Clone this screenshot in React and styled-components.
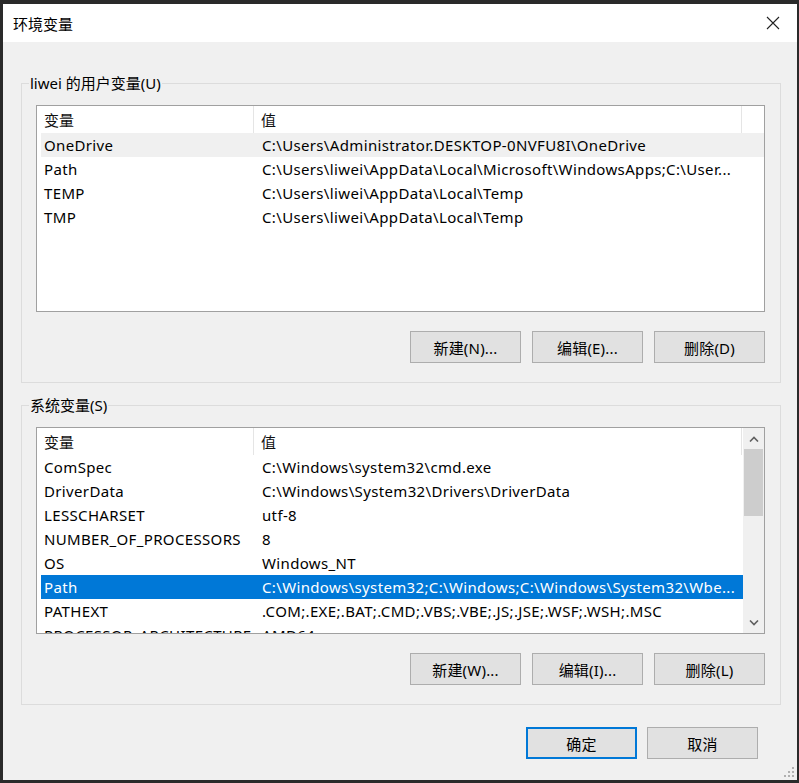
import React from "react";
import styled, { createGlobalStyle } from "styled-components";

const Global = createGlobalStyle`
  html, body { margin: 0; padding: 0; background: #2a2a2a; }
  body { font-family: "Noto Sans", "Noto Sans CJK SC", sans-serif; }
  * { box-sizing: border-box; }
`;

const FONT = `"Noto Sans", "Noto Sans CJK SC", sans-serif`;

const Window = styled.div`
  width: 799px;
  height: 783px;
  border-style: solid;
  border-color: #2a2a2a;
  border-width: 4px 2px 3px 3px;
  display: flex;
  flex-direction: column;
  background: #f0f0f0;
  position: relative;
  font-family: ${FONT};
  font-size: 15px;
  color: #000;
`;

const TitleBar = styled.div`
  height: 38px;
  flex: none;
  background: #fff;
  display: flex;
  align-items: center;
  justify-content: space-between;
  padding: 0 17px 0 10px;
`;

const Title = styled.div`
  font-size: 15px;
  color: #000;
`;

const CloseBtn = styled.div`
  width: 14px;
  height: 14px;
  display: flex;
`;

const Body = styled.div`
  flex: 1;
  display: flex;
  flex-direction: column;
  padding: 31px 16px 0 18px;
`;

const Group = styled.fieldset`
  margin: 0 0 ${(p) => p.$mb || 0}px 0;
  border: 1px solid #dcdcdc;
  padding: 12px 15px 19px 14px;
  min-width: 0;
  display: flex;
  flex-direction: column;
`;

const Legend = styled.legend`
  padding: 0 1px;
  margin-left: -7px;
  font-size: 15px;
  line-height: 20px;
  color: #000;
`;

const ListBox = styled.div`
  height: ${(p) => p.$h}px;
  flex: none;
  border: 1px solid #a0a0a0;
  background: #fff;
  display: flex;
  overflow: hidden;
`;

const ListContent = styled.div`
  flex: 1;
  overflow: hidden;
  display: flex;
  flex-direction: column;
`;

const Header = styled.div`
  height: 27px;
  flex: none;
  display: grid;
  grid-template-columns: 217px 488px;
  align-items: stretch;
`;

const HeadCell = styled.div`
  display: flex;
  align-items: center;
  padding-left: ${(p) => p.$pl}px;
  border-right: 1px solid #e5e5e5;
  font-size: 15px;
  color: #111;
`;

const Rows = styled.div`
  padding-left: 4px;
  display: flex;
  flex-direction: column;
`;

const Row = styled.div`
  height: 24px;
  flex: none;
  display: grid;
  grid-template-columns: 213px 488px;
  align-items: center;
  white-space: nowrap;
  letter-spacing: 0.35px;
  background: ${(p) => (p.$sel ? "#0078d7" : p.$hover ? "#f0f0f0" : "transparent")};
  color: ${(p) => (p.$sel ? "#fff" : "#000")};
`;

const Cell = styled.div`
  padding-left: ${(p) => p.$pl}px;
  overflow: hidden;
`;

const ScrollBar = styled.div`
  width: 21px;
  flex: none;
  background: #f0f0f0;
  display: flex;
  flex-direction: column;
  align-items: center;
`;

const Arrow = styled.div`
  height: 21px;
  width: 100%;
  flex: none;
  display: flex;
  align-items: center;
  justify-content: center;
`;

const Track = styled.div`
  flex: 1;
  width: 100%;
  padding: 0 1px;
  display: flex;
  flex-direction: column;
`;

const Thumb = styled.div`
  height: 67px;
  background: #cdcdcd;
`;

const ButtonRow = styled.div`
  display: flex;
  justify-content: flex-end;
  gap: ${(p) => p.$gap ?? 11}px;
  margin-top: ${(p) => p.$mt ?? 19}px;
  padding-right: ${(p) => p.$pr || 0}px;
`;

const Button = styled.button`
  width: 111px;
  height: 32px;
  background: #e1e1e1;
  border: 1px solid ${(p) => (p.$def ? "#0078d7" : "#adadad")};
  box-shadow: ${(p) => (p.$def ? "inset 0 0 0 1px #0078d7" : "none")};
  font-family: ${FONT};
  font-size: 15px;
  letter-spacing: 0.2px;
  color: #000;
  padding: 0;
  margin: 0;
`;

const Grip = styled.svg`
  position: absolute;
  right: 2px;
  bottom: 2px;
`;

const Chevron = ({ up }) => (
  <svg width="10" height="6" viewBox="0 0 10 6">
    <path
      d={up ? "M1 5.5 L5 1.5 L9 5.5" : "M1 0.5 L5 4.5 L9 0.5"}
      fill="none"
      stroke="#606060"
      strokeWidth="1.6"
    />
  </svg>
);

const userVars = [
  ["OneDrive", "C:\\Users\\Administrator.DESKTOP-0NVFU8I\\OneDrive"],
  ["Path", "C:\\Users\\liwei\\AppData\\Local\\Microsoft\\WindowsApps;C:\\User..."],
  ["TEMP", "C:\\Users\\liwei\\AppData\\Local\\Temp"],
  ["TMP", "C:\\Users\\liwei\\AppData\\Local\\Temp"],
];

const sysVars = [
  ["ComSpec", "C:\\Windows\\system32\\cmd.exe"],
  ["DriverData", "C:\\Windows\\System32\\Drivers\\DriverData"],
  ["LESSCHARSET", "utf-8"],
  ["NUMBER_OF_PROCESSORS", "8"],
  ["OS", "Windows_NT"],
  ["Path", "C:\\Windows\\system32;C:\\Windows;C:\\Windows\\System32\\Wbe..."],
  ["PATHEXT", ".COM;.EXE;.BAT;.CMD;.VBS;.VBE;.JS;.JSE;.WSF;.WSH;.MSC"],
  ["PROCESSOR_ARCHITECTURE", "AMD64"],
];

function VarList({ vars, height, scroll, hoverIdx, selIdx }) {
  return (
    <ListBox $h={height}>
      <ListContent>
        <Header>
          <HeadCell $pl={7}>变量</HeadCell>
          <HeadCell $pl={7}>值</HeadCell>
        </Header>
        <Rows>
          {vars.map(([k, v], i) => (
            <Row key={k} $hover={i === hoverIdx} $sel={i === selIdx}>
              <Cell $pl={3}>{k}</Cell>
              <Cell $pl={8}>{v}</Cell>
            </Row>
          ))}
        </Rows>
      </ListContent>
      {scroll && (
        <ScrollBar>
          <Arrow>
            <Chevron up />
          </Arrow>
          <Track>
            <Thumb />
          </Track>
          <Arrow>
            <Chevron />
          </Arrow>
        </ScrollBar>
      )}
    </ListBox>
  );
}

export default function App() {
  return (
    <>
      <Global />
      <Window>
        <TitleBar>
          <Title>环境变量</Title>
          <CloseBtn>
            <svg width="14" height="14" viewBox="0 0 14 14">
              <path d="M1 1 L13 13 M13 1 L1 13" stroke="#222" strokeWidth="1.1" />
            </svg>
          </CloseBtn>
        </TitleBar>
        <Body>
          <Group $mb={12}>
            <Legend>liwei 的用户变量(U)</Legend>
            <VarList vars={userVars} height={207} hoverIdx={0} />
            <ButtonRow>
              <Button>新建(N)...</Button>
              <Button>编辑(E)...</Button>
              <Button>删除(D)</Button>
            </ButtonRow>
          </Group>
          <Group>
            <Legend>系统变量(S)</Legend>
            <VarList vars={sysVars} height={207} scroll selIdx={5} />
            <ButtonRow>
              <Button>新建(W)...</Button>
              <Button>编辑(I)...</Button>
              <Button>删除(L)</Button>
            </ButtonRow>
          </Group>
          <ButtonRow $gap={10} $pr={23} $mt={22}>
            <Button $def>确定</Button>
            <Button>取消</Button>
          </ButtonRow>
        </Body>
        <Grip width="12" height="12" viewBox="0 0 12 12">
          {[
            [9, 1], [9, 5], [5, 5], [9, 9], [5, 9], [1, 9],
          ].map(([x, y]) => (
            <rect key={`${x}-${y}`} x={x} y={y} width="2" height="2" fill="#b0b0b0" />
          ))}
        </Grip>
      </Window>
    </>
  );
}
